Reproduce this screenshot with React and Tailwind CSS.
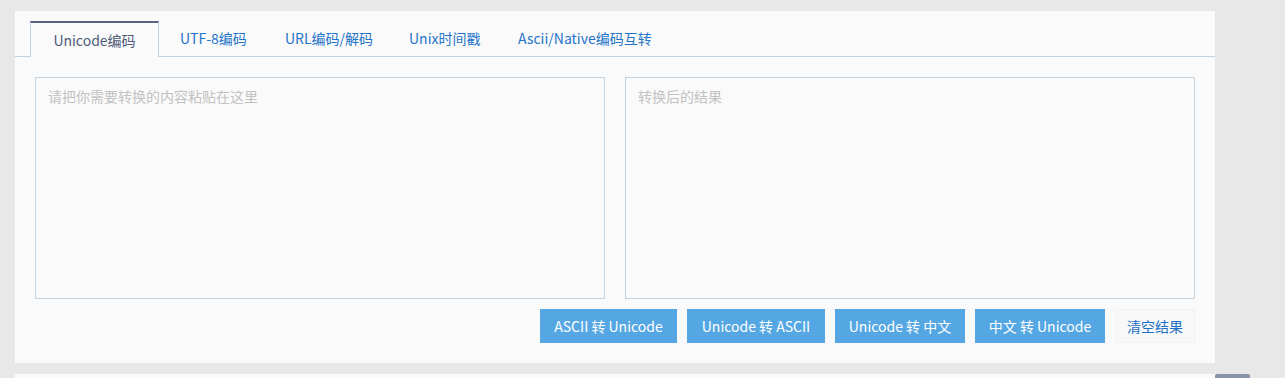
import { useState } from "react";

const tabs = [
  { label: "Unicode编码", w: "w-[129px]" },
  { label: "UTF-8编码", w: "w-[105px]" },
  { label: "URL编码/解码", w: "w-[124px]" },
  { label: "Unix时间戳", w: "w-[109px]" },
  { label: "Ascii/Native编码互转", w: "w-[170px]" },
];
const actions = [
  { label: "ASCII 转 Unicode", w: "w-[137px]" },
  { label: "Unicode 转 ASCII", w: "w-[138px]" },
  { label: "Unicode 转 中文", w: "w-[130px]" },
  { label: "中文 转 Unicode", w: "w-[130px]" },
];

const font = { fontFamily: '"Microsoft YaHei", "Noto Sans CJK SC", "Noto Sans", sans-serif' };

export default function App() {
  const [active, setActive] = useState(0);
  const [input, setInput] = useState("");
  const [output, setOutput] = useState("");

  return (
    <div className="h-[378px] bg-[#e8e8e8] pt-[11px] overflow-hidden" style={font}>
      <div className="ml-[15px] w-[1200px] bg-[#fafafa] pb-[20px]">
        <div className="flex h-[46px] items-end border-b border-[#c4d3e0] pl-[15px]">
          {tabs.map((tab, i) =>
            i === active ? (
              <button
                key={tab.label}
                onClick={() => setActive(i)}
                className={`-mb-px h-[36px] ${tab.w} whitespace-nowrap border-x border-t-2 border-[#c4d3e0] border-t-[#56647f] bg-[#fafafa] text-[14px] text-[#4d5a77]`}
              >
                {tab.label}
              </button>
            ) : (
              <button
                key={tab.label}
                onClick={() => setActive(i)}
                className={`h-[35px] ${tab.w} whitespace-nowrap pl-[21px] text-left text-[14px] text-[#1f74c9]`}
              >
                {tab.label}
              </button>
            )
          )}
        </div>

        <div className="mt-[20px] flex gap-[20px] px-[20px]">
          <textarea
            value={input}
            onChange={(e) => setInput(e.target.value)}
            placeholder="请把你需要转换的内容粘贴在这里"
            className="h-[222px] w-[570px] resize-none border border-[#c4d3e0] bg-[#fafafa] px-[12px] py-[8px] text-[14px] text-[#333] outline-none placeholder:text-[#c2c2c2]"
          />
          <textarea
            value={output}
            onChange={(e) => setOutput(e.target.value)}
            placeholder="转换后的结果"
            className="h-[222px] w-[570px] resize-none border border-[#c4d3e0] bg-[#fafafa] px-[12px] py-[8px] text-[14px] text-[#333] outline-none placeholder:text-[#c2c2c2]"
          />
        </div>

        <div className="mt-[10px] flex justify-end gap-[10px] px-[20px]">
          {actions.map((a) => (
            <button key={a.label} className={`h-[34px] ${a.w} whitespace-nowrap bg-[#55a7e3] text-[14px] text-white`}>
              {a.label}
            </button>
          ))}
          <button
            onClick={() => setOutput("")}
            className="h-[34px] w-[80px] whitespace-nowrap border border-[#f2f2f2] bg-[#f8f8f8] text-[14px] text-[#1f6fc4]"
          >
            清空结果
          </button>
        </div>
      </div>

      <div className="mt-[11px] flex">
        <div className="ml-[15px] h-[40px] w-[1200px] bg-[#fafafa]" />
        <div className="h-[40px] w-[35px] rounded-t-[2px] bg-[#8a93a9]" />
      </div>
    </div>
  );
}
